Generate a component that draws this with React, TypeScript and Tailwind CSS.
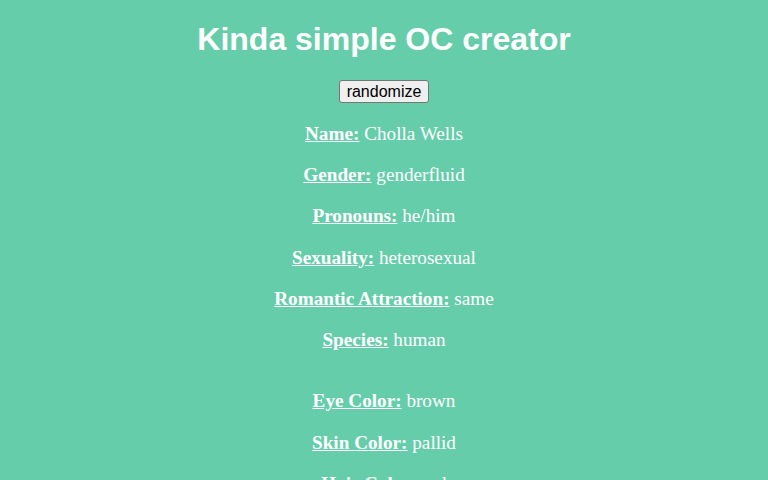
const traits: [string, string][] = [
  ["Name:", "Cholla Wells"],
  ["Gender:", "genderfluid"],
  ["Pronouns:", "he/him"],
  ["Sexuality:", "heterosexual"],
  ["Romantic Attraction:", "same"],
  ["Species:", "human"],
];

const looks: [string, string][] = [
  ["Eye Color:", "brown"],
  ["Skin Color:", "pallid"],
  ["Hair Color:", "red"],
];

function Trait({ label, value }: { label: string; value: string }) {
  return (
    <p className="my-[19.2px] text-[19.2px] leading-[22px]">
      <u className="font-bold">{label}</u> {value}
    </p>
  );
}

export default function App() {
  return (
    <div className="min-h-screen bg-[#66cdaa] text-center text-white font-['Liberation_Serif',serif] flow-root">
      <h1 className="my-[21.44px] text-[32px] leading-[37px] font-bold font-['Liberation_Sans',Arial,sans-serif]">
        Kinda simple OC creator
      </h1>
      <button className="h-[23px] px-[7px] border border-[#767676] rounded-[3px] bg-[#efefef] text-black text-[16px] leading-[19px] font-['Liberation_Sans',Arial,sans-serif]">
        randomize
      </button>
      {traits.map(([l, v]) => (
        <Trait key={l} label={l} value={v} />
      ))}
      <div className="h-px" />
      {looks.map(([l, v]) => (
        <Trait key={l} label={l} value={v} />
      ))}
    </div>
  );
}
